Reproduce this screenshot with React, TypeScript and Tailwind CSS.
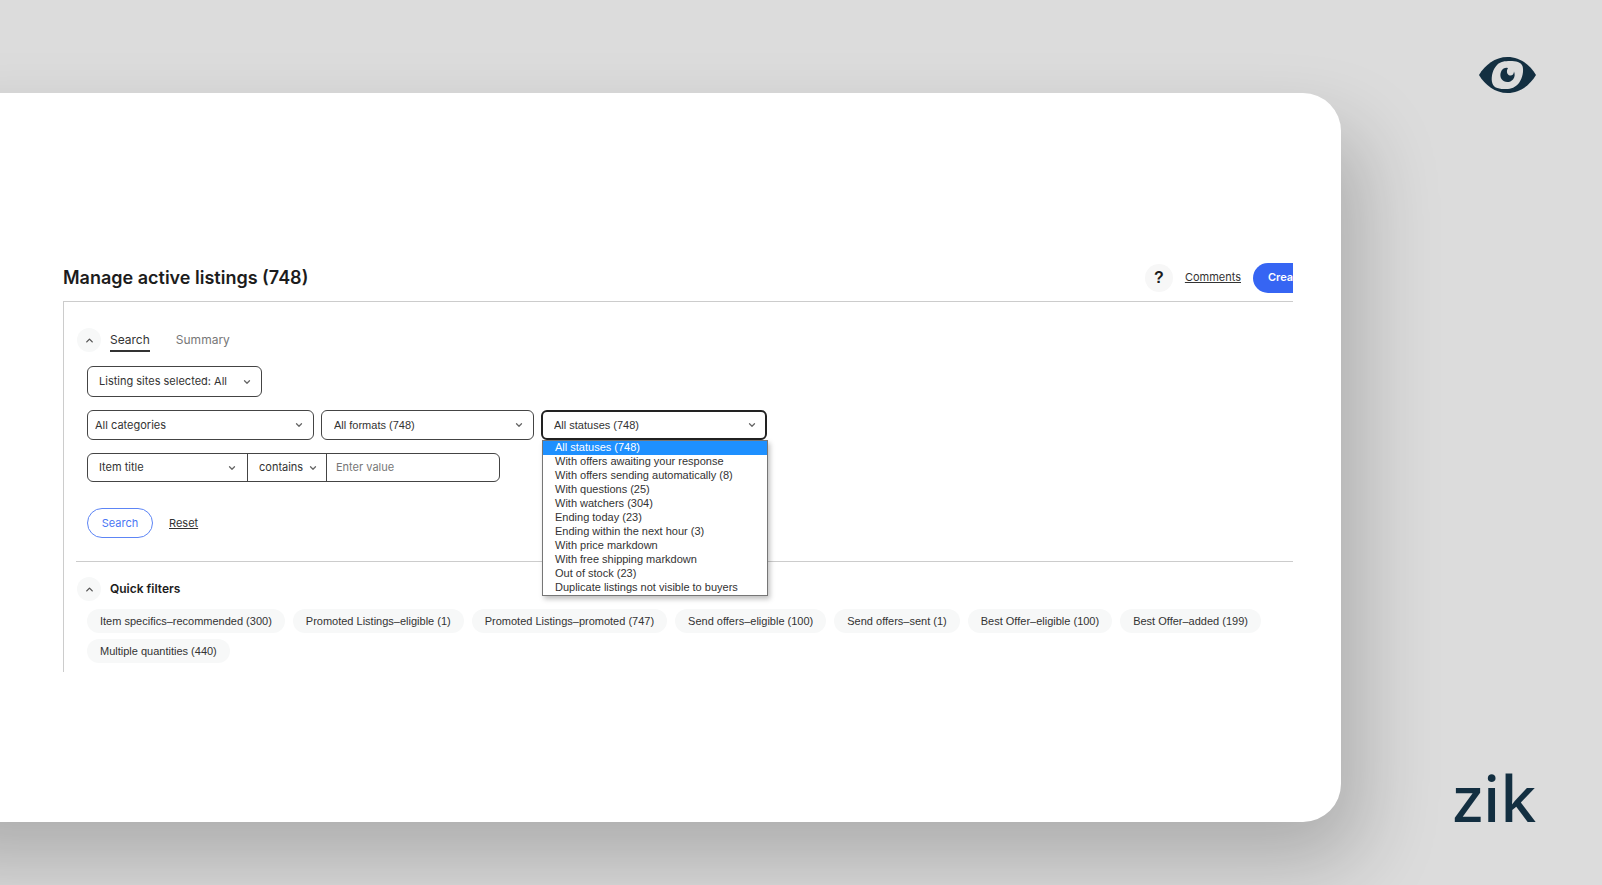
import { useState } from 'react';
import type { ReactNode } from 'react';
import { ChevronDown, ChevronUp } from 'lucide-react';
import clsx from 'clsx';

const statuses = [
  'All statuses (748)',
  'With offers awaiting your response',
  'With offers sending automatically (8)',
  'With questions (25)',
  'With watchers (304)',
  'Ending today (23)',
  'Ending within the next hour (3)',
  'With price markdown',
  'With free shipping markdown',
  'Out of stock (23)',
  'Duplicate listings not visible to buyers',
];

const quickFilters = [
  'Item specifics–recommended (300)',
  'Promoted Listings–eligible (1)',
  'Promoted Listings–promoted (747)',
  'Send offers–eligible (100)',
  'Send offers–sent (1)',
  'Best Offer–eligible (100)',
  'Best Offer–added (199)',
  'Multiple quantities (440)',
];

interface SelectBoxProps {
  label: string;
  value: string;
  className?: string;
  selectClassName?: string;
  chevronClassName?: string;
  children?: ReactNode;
}

function SelectBox({ label, value, className, selectClassName, chevronClassName, children }: SelectBoxProps) {
  return (
    <div className={clsx('relative', className)}>
      <select
        aria-label={label}
        className={clsx('block h-full w-full appearance-none bg-transparent text-[#333] outline-none', selectClassName)}
      >
        <option>{value}</option>
      </select>
      <ChevronDown
        strokeWidth={3}
        className={clsx('pointer-events-none absolute top-1/2 h-[10px] w-[10px] -translate-y-1/2 text-[#666]', chevronClassName)}
      />
      {children}
    </div>
  );
}

function CollapseButton({ label }: { label: string }) {
  return (
    <button aria-label={label} className="flex h-6 w-6 items-center justify-center rounded-full bg-[#f7f8f8] text-[#555]">
      <ChevronUp strokeWidth={3} className="h-[11px] w-[11px]" />
    </button>
  );
}

function StatusList() {
  const [selected, setSelected] = useState(statuses[0]);

  return (
    <ul
      role="listbox"
      aria-label="Statuses"
      className="absolute top-full left-px z-10 w-full border border-[#767676] bg-white shadow-[2px_3px_5px_rgba(0,0,0,0.25)]"
    >
      {statuses.map((status) => (
        <li
          key={status}
          role="option"
          aria-selected={selected === status}
          onClick={() => setSelected(status)}
          className={clsx(
            'h-[14px] pl-3 leading-[13px] whitespace-nowrap',
            selected === status ? 'bg-[#1e90ff] text-white' : 'text-[#333]',
          )}
        >
          {status}
        </li>
      ))}
    </ul>
  );
}

function EyeLogo() {
  return (
    <svg viewBox="0 0 57 36" className="h-9 w-[57px]" role="img" aria-label="Eye">
      <path fill="#132f41" d="M0 18C6 8 16 0 28.500 0S51 8 57 18C51 28 41 36 28.500 36S6 28 0 18Z" />
      <path
        fill="#dcdcdc"
        d="M18 8C21 4.500 26 4 31 4C37 4 42 5 43.500 9C45 14 43.500 21 40 26C36 31 31 32.500 25 32C18 32 14 30 13 25C12 19 14 12 18 8Z"
      />
      <path
        fill="#132f41"
        d="M29 11C27 14 28 18 31 18.500C33 19 35 17 35 14.500C36 17 36 20 34 22.500C31 26 25 26 22.500 22C20 18 22 12 26 11Q27.500 10.500 29 11Z"
      />
    </svg>
  );
}

export default function App() {
  return (
    <div className="flex min-h-screen overflow-hidden bg-[#dcdcdc] font-['Liberation_Sans',sans-serif] text-[11px] text-[#333]">
      <main className="mt-[93px] mb-[63px] -ml-24 min-w-0 flex-1 rounded-r-[38px] bg-white pt-[169px] pr-12 pl-[159px] shadow-[20px_40px_80px_rgba(0,0,0,0.22)]">
        {/* Title bar */}
        <header className="flex h-[31px] items-center">
          <h1 className="flex-1 font-['Inter',sans-serif] text-lg font-semibold text-[#1c1c1c]">Manage active listings (748)</h1>
          <button className="mr-3 h-7 w-7 rounded-full bg-[#f7f7f7] text-base font-bold text-[#1c1c1c]">?</button>
          <a href="#comments" className="mr-3 font-['Inter',sans-serif] underline">Comments</a>
          <button className="h-[30px] w-10 rounded-l-full bg-[#3665f3] pl-[15px] text-left font-['Inter',sans-serif] font-semibold text-white">
            Crea
          </button>
        </header>

        <div className="mt-2 h-[371px] border-t border-l border-[#ccc] pl-3">
          {/* Search form */}
          <section className="border-b border-[#ccc] pt-[26px] pb-[23px]">
            <div className="flex h-6 items-center pl-px">
              <CollapseButton label="Collapse search" />
              <div role="tablist" className="ml-[9px] flex gap-[26px] font-['Inter',sans-serif] text-xs">
                <button role="tab" aria-selected="true" className="relative after:absolute after:inset-x-0 after:-bottom-1 after:h-[2px] after:bg-[#333]">
                  Search
                </button>
                <button role="tab" aria-selected="false" className="text-[#777]">Summary</button>
              </div>
            </div>

            <form className="mt-[14px] pl-[11px]" onSubmit={(e) => e.preventDefault()}>
              <SelectBox
                label="Listing sites"
                value="Listing sites selected: All"
                className="h-[31px] w-[175px] font-['Inter',sans-serif]"
                selectClassName="rounded-md border border-[#444] pl-[11px]"
                chevronClassName="right-[10px]"
              />
              <div className="mt-[13px] flex gap-[7px]">
                <SelectBox
                  label="Category"
                  value="All categories"
                  className="h-[30px] w-[227px] font-['Inter',sans-serif]"
                  selectClassName="rounded-md border border-[#444] pl-[7px]"
                  chevronClassName="right-[10px]"
                />
                <SelectBox
                  label="Format"
                  value="All formats (748)"
                  className="h-[30px] w-[213px]"
                  selectClassName="rounded-md border border-[#444] pl-3"
                  chevronClassName="right-[10px]"
                />
                <SelectBox
                  label="Status"
                  value="All statuses (748)"
                  className="h-[30px] w-[226px]"
                  selectClassName="rounded-md border-2 border-[#222] pl-[11px]"
                  chevronClassName="right-[10px]"
                >
                  <StatusList />
                </SelectBox>
              </div>
              <div className="mt-[13px] flex h-[29px] w-[413px] rounded-md border border-[#444] font-['Inter',sans-serif]">
                <SelectBox
                  label="Search field"
                  value="Item title"
                  className="w-[160px] border-r border-[#444]"
                  selectClassName="pl-[11px]"
                  chevronClassName="right-[10px]"
                />
                <SelectBox
                  label="Match type"
                  value="contains"
                  className="w-[79px] border-r border-[#444]"
                  selectClassName="pl-[11px]"
                  chevronClassName="right-[8px]"
                />
                <input
                  aria-label="Value"
                  placeholder="Enter value"
                  className="min-w-0 flex-1 pl-[9px] outline-none placeholder:text-[#777]"
                />
              </div>
              <div className="mt-[26px] flex items-center gap-4 font-['Inter',sans-serif]">
                <button className="h-[30px] w-[66px] rounded-full border border-[#5d85f5] text-[#4a76f4]">Search</button>
                <a href="#reset" className="underline">Reset</a>
              </div>
            </form>
          </section>

          {/* Quick filters */}
          <section className="pt-[15px]">
            <div className="flex items-center gap-[9px] pl-px">
              <CollapseButton label="Collapse quick filters" />
              <h2 className="font-['Inter',sans-serif] text-xs font-semibold text-[#1c1c1c]">Quick filters</h2>
            </div>
            <div className="mt-2 flex flex-wrap gap-x-2 gap-y-[6px] pl-[11px]">
              {quickFilters.map((filter) => (
                <button key={filter} className="h-6 rounded-full bg-[#f7f8f8] px-[13px] whitespace-nowrap">
                  {filter}
                </button>
              ))}
            </div>
          </section>
        </div>
      </main>

      {/* Branding */}
      <aside className="flex w-[261px] shrink-0 flex-col items-end justify-between pt-[57px] pr-[66px] pb-[63px]">
        <EyeLogo />
        <span className="h-12 font-['Noto_Sans',sans-serif] text-[64px] leading-[48px] font-medium text-[#132f41]">zik</span>
      </aside>
    </div>
  );
}
